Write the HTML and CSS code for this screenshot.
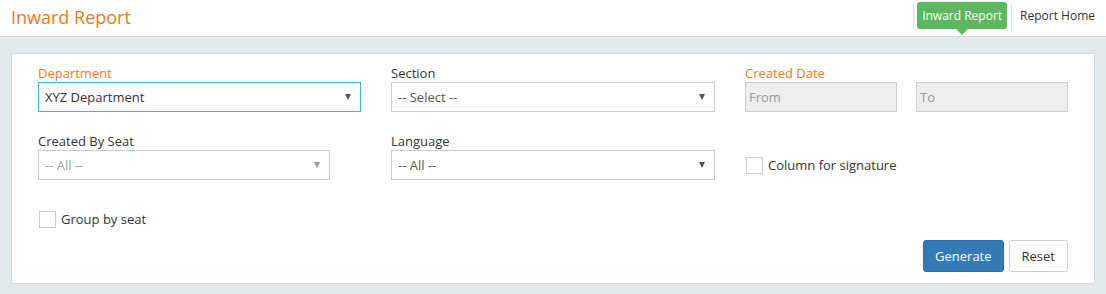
FILE: index.html
```html
<!DOCTYPE html>
<html>
<head>
<meta charset="utf-8">
<link rel="stylesheet" href="styles.css">
</head>
<body>
<header class="topbar">
  <h1 class="title">Inward Report</h1>
  <nav class="tabs">
    <span class="sep"></span>
    <span class="tab active">Inward Report</span>
    <span class="sep"></span>
    <span class="tab home">Report Home</span>
  </nav>
</header>
<main class="content">
  <section class="panel">
    <div class="grid">
      <div class="field">
        <label class="lbl req">Department</label>
        <div class="select focus"><span>XYZ Department</span><i class="caret"></i></div>
      </div>
      <div class="field">
        <label class="lbl">Section</label>
        <div class="select"><span class="muted">-- Select --</span><i class="caret"></i></div>
      </div>
      <div class="field">
        <label class="lbl req">Created Date</label>
        <div class="dates">
          <div class="input disabled">From</div>
          <div class="input disabled">To</div>
        </div>
      </div>
      <div class="field">
        <label class="lbl">Created By Seat</label>
        <div class="select short disabled-sel"><span class="light">-- All --</span><i class="caret light"></i></div>
      </div>
      <div class="field">
        <label class="lbl">Language</label>
        <div class="select"><span class="muted">-- All --</span><i class="caret"></i></div>
      </div>
      <div class="field check-field">
        <label class="check"><span class="box"></span>Column for signature</label>
      </div>
    </div>
    <div class="group-row">
      <label class="check"><span class="box"></span>Group by seat</label>
    </div>
    <div class="actions">
      <button class="btn primary">Generate</button>
      <button class="btn">Reset</button>
    </div>
  </section>
</main>
</body>
</html>
```
FILE: styles.css
```css
* { box-sizing: border-box; }
html, body { margin: 0; padding: 0; }
body {
  font-family: "Open Sans", "Noto Sans", sans-serif;
  font-size: 13px;
  color: #333;
  background: #e4eaec;
  width: 1106px;
  height: 294px;
  overflow: hidden;
}
.topbar {
  height: 37px;
  background: #fff;
  border-bottom: 1px solid #d2dade;
  display: flex;
  justify-content: space-between;
  align-items: flex-start;
  padding: 0 11px;
}
.title {
  margin: 0;
  font-size: 18px;
  font-weight: 400;
  color: #f07a1e;
  line-height: 34px;
}
.tabs {
  display: flex;
  align-items: flex-start;
  padding-top: 2px;
  font-size: 12px;
}
.sep {
  width: 1px;
  height: 26px;
  margin-top: 2px;
  background: #d3e2ea;
}
.tab {
  line-height: 27px;
  height: 27px;
  position: relative;
}
.tab.home { padding: 0 0 0 8px; }
.tab.active {
  background: #5cb85c;
  color: #fff;
  border-radius: 3px;
  margin: 0 4px 0 3px;
  padding: 0 5px;
}
.tab.active::after {
  content: "";
  position: absolute;
  left: 50%;
  bottom: -6px;
  margin-left: -6px;
  border-left: 6px solid transparent;
  border-right: 6px solid transparent;
  border-top: 6px solid #5cb85c;
}
.content {
  padding: 16px 11px 0 11px;
}
.panel {
  background: #fff;
  border: 1px solid #cfdde5;
  padding: 10px 26px 10px 26px;
  height: 231px;
}
.grid {
  display: grid;
  grid-template-columns: 323px 324px 323px;
  column-gap: 30px;
  row-gap: 20px;
}
.field { display: flex; flex-direction: column; }
.lbl {
  line-height: 18px;
  height: 18px;
  margin-bottom: 0;
  color: #333;
}
.lbl.req { color: #f07a1e; }
.select {
  height: 30px;
  border: 1px solid #ccc;
  display: flex;
  align-items: center;
  justify-content: space-between;
  padding: 0 9px 0 6px;
  background: #fff;
}
.select.focus { border-color: #3fb4de; }
.select.short { width: 292px; }
.muted { color: #555; }
.light { color: #a0a0a0; }
.caret {
  width: 0; height: 0;
  border-left: 3px solid transparent;
  border-right: 3px solid transparent;
  border-top: 6px solid #555;
}
.caret.light { border-top-color: #999; }
.dates {
  display: flex;
  justify-content: space-between;
}
.input {
  width: 152px;
  height: 30px;
  border: 1px solid #ccc;
  line-height: 28px;
  padding-left: 3px;
}
.input.disabled { background: #eee; color: #999; }
.check-field { padding-top: 25px; }
.check {
  display: flex;
  align-items: center;
  gap: 5px;
  color: #333;
  line-height: 17px;
}
.box {
  width: 17px; height: 17px;
  border: 1px solid #ccc;
  background: #fff;
}
.check-field .check { margin-left: 1px; }
.group-row {
  margin-top: 31px;
  padding-left: 1px;
}
.actions {
  display: flex;
  justify-content: flex-end;
  gap: 5px;
  margin-top: 12px;
}
.btn {
  font-family: inherit;
  font-size: 13px;
  height: 32px;
  padding: 0 12px;
  border: 1px solid #ccc;
  border-radius: 3px;
  background: #fff;
  color: #333;
}
.btn.primary {
  background: #337ab7;
  border-color: #2e6da4;
  color: #fff;
  padding: 0 11px;
}
```
